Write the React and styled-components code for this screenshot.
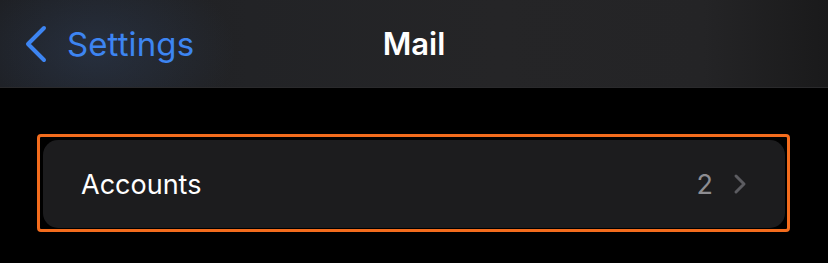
import styled, { createGlobalStyle } from "styled-components";

const GlobalStyle = createGlobalStyle`
  html, body {
    margin: 0;
    padding: 0;
    background: #000;
  }
  body {
    font-family: Inter, "Noto Sans", "Liberation Sans", sans-serif;
    -webkit-font-smoothing: antialiased;
  }
`;

const Page = styled.div`
  width: 828px;
  height: 263px;
  background: #000;
  overflow: hidden;
`;

const NavBar = styled.header`
  position: relative;
  height: 88px;
  display: flex;
  align-items: center;
  padding: 0 24px;
  box-sizing: border-box;
  border-bottom: 1px solid #2a2a2c;
  background:
    radial-gradient(ellipse 140px 90px at 95px 50px, rgba(45, 60, 85, 0.55), rgba(45, 60, 85, 0) 100%),
    linear-gradient(90deg, #1d1e21 0%, #222326 30%, #252527 60%, #242426 85%, #1a1a1b 100%);
`;

const BackButton = styled.button`
  display: flex;
  align-items: center;
  gap: 19px;
  background: none;
  border: none;
  padding: 0;
  color: #3d85f2;
  font-family: inherit;
  font-size: 33px;
  font-weight: 400;
  letter-spacing: 0.1px;
  cursor: pointer;
`;

const Title = styled.h1`
  position: absolute;
  left: 50%;
  top: 50%;
  transform: translate(-50%, -52%);
  margin: 0;
  color: #fff;
  font-size: 31px;
  font-weight: 600;
`;

const Content = styled.main`
  padding: 46px 38px 0 37px;
`;

const Highlight = styled.div`
  border: 3px solid #f36c1d;
  border-radius: 4px;
  padding: 3px 2px 1px 3px;
`;

const Row = styled.div`
  height: 88px;
  display: flex;
  align-items: center;
  justify-content: space-between;
  padding: 0 38px 0 38px;
  background: #1c1c1e;
  border-radius: 15px;
  color: #fff;
  font-size: 27px;
`;

const Detail = styled.div`
  display: flex;
  align-items: center;
  gap: 20px;
  color: #8d8d92;
`;

const Chevron = ({ color, width, height, stroke, points }) => (
  <svg width={width} height={height} viewBox={`0 0 ${width} ${height}`} fill="none">
    <polyline
      points={points}
      stroke={color}
      strokeWidth={stroke}
      strokeLinecap="round"
      strokeLinejoin="round"
    />
  </svg>
);

export default function App() {
  return (
    <Page>
      <GlobalStyle />
      <NavBar>
        <BackButton>
          <Chevron color="#3d85f2" width={24} height={38} stroke={4} points="20,3 4,19 20,35" />
          Settings
        </BackButton>
        <Title>Mail</Title>
      </NavBar>
      <Content>
        <Highlight>
          <Row>
            <span>Accounts</span>
            <Detail>
              <span>2</span>
              <Chevron color="#5c5c61" width={14} height={22} stroke={3} points="3,3 11,11 3,19" />
            </Detail>
          </Row>
        </Highlight>
      </Content>
    </Page>
  );
}
